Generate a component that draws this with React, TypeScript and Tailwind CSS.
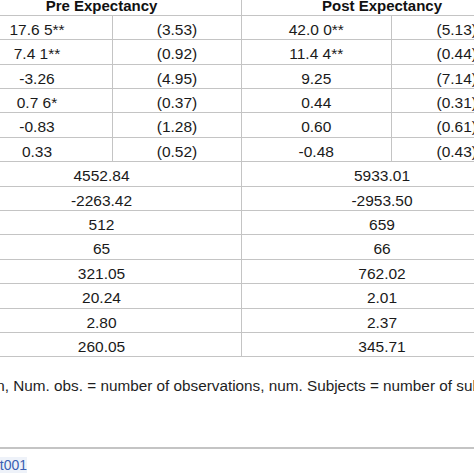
import React from "react";

const coef: string[][] = [
  ["17.6 5**", "(3.53)", "42.0 0**", "(5.13)"],
  ["7.4 1**", "(0.92)", "11.4 4**", "(0.44)"],
  ["-3.26", "(4.95)", "9.25", "(7.14)"],
  ["0.7 6*", "(0.37)", "0.44", "(0.31)"],
  ["-0.83", "(1.28)", "0.60", "(0.61)"],
  ["0.33", "(0.52)", "-0.48", "(0.43)"],
];

const stats: string[][] = [
  ["4552.84", "5933.01"],
  ["-2263.42", "-2953.50"],
  ["512", "659"],
  ["65", "66"],
  ["321.05", "762.02"],
  ["20.24", "2.01"],
  ["2.80", "2.37"],
  ["260.05", "345.71"],
];

export default function App() {
  return (
    <div
      className="w-[474px] h-[474px] overflow-hidden bg-white text-[#1a1a1a]"
      style={{ fontFamily: '"Liberation Sans", Arial, sans-serif' }}
    >
      <div className="ml-[-38px] mt-[-8.5px] w-[560px]">
        {/* header */}
        <div className="flex h-[24.4px] border-b-[1.5px] border-[#c4c4c4] text-[15px] font-bold text-[#111] leading-none">
          <div className="w-[280px] border-r-[1.5px] border-[#c4c4c4] flex items-center justify-center pt-[4px]">
            Pre Expectancy
          </div>
          <div className="w-[280px] flex items-center justify-center pt-[4px]">
            Post Expectancy
          </div>
        </div>
        {coef.map((r, i) => (
          <div
            key={i}
            className="flex h-[24.4px] border-b-[1.5px] border-[#c4c4c4] text-[15.5px] leading-none"
          >
            <div className="w-[151px] border-r-[1.5px] border-[#c4c4c4] flex items-center justify-center pt-[4px]">
              {r[0]}
            </div>
            <div className="w-[129px] border-r-[1.5px] border-[#c4c4c4] flex items-center justify-center pt-[4px]">
              {r[1]}
            </div>
            <div className="w-[149.5px] border-r-[1.5px] border-[#c4c4c4] flex items-center justify-center pt-[4px]">
              {r[2]}
            </div>
            <div className="w-[130.5px] flex items-center justify-center pt-[4px]">
              {r[3]}
            </div>
          </div>
        ))}
        {stats.map((r, i) => (
          <div
            key={i}
            className="flex h-[24.4px] border-b-[1.5px] border-[#c4c4c4] text-[15.5px] leading-none"
          >
            <div className="w-[280px] border-r-[1.5px] border-[#c4c4c4] flex items-center justify-center pt-[4px]">
              {r[0]}
            </div>
            <div className="w-[280px] flex items-center justify-center pt-[4px]">
              {r[1]}
            </div>
          </div>
        ))}
      </div>

      {/* footnote */}
      <div className="mt-[20px] flex whitespace-nowrap text-[15.3px] leading-[18px] text-[#1e1e1e]">
        <div className="w-[9px] shrink-0 flex justify-end">
          <span className="shrink-0">Bayesian Information Criterion,</span>
        </div>
        <span className="shrink-0">&nbsp;Num. obs. = number of observations, num. Subjects = number of subjects</span>
      </div>

      <div className="mt-[51.5px] h-[2px] bg-[#c4c4c4]" />

      <div className="mt-[8px] flex whitespace-nowrap text-[14px] leading-[16px]">
        <div className="w-[27px] shrink-0 flex justify-end">
          <span className="shrink-0 bg-[#eef2f9] text-[#3a5fb3]">
            https://doi.org/10.1371/journal.pone.0000000.t001
          </span>
        </div>
      </div>
    </div>
  );
}
